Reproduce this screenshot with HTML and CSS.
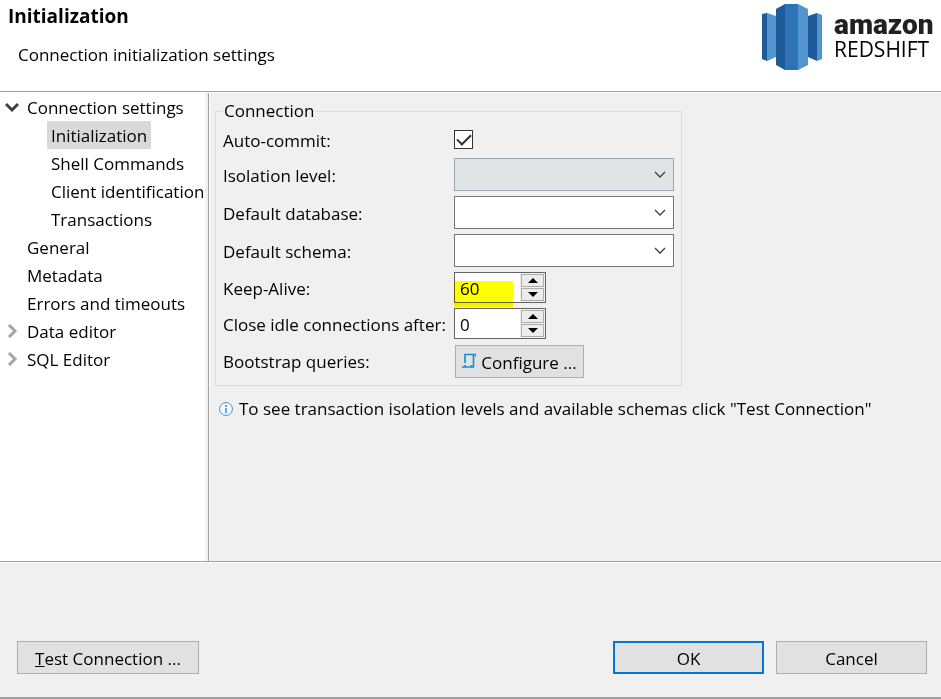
FILE: index.html
```
<!DOCTYPE html>
<html lang="en">
<head>
    <meta charset="UTF-8">
    <meta name="viewport" content="width=device-width, initial-scale=1.0">
    <title>Initialization</title>
    <link rel="stylesheet" href="styles.css">
</head>
<body>
    <header class="header">
        <div>
            <h1>Initialization</h1>
            <p>Connection initialization settings</p>
        </div>
        <div class="logo">
            <svg width="60" height="66" viewBox="0 0 60 66">
                <path fill="#205b99" d="M0 10l5-1v48l-5-2z"/>
                <path fill="#5294cf" d="M5 9l9 3v41l-9 4z"/>
                <path fill="#205b99" d="M46 12l9-3v48l-9-4z"/>
                <path fill="#5294cf" d="M55 9l5 2v44l-5 2z"/>
                <path fill="#205b99" d="M14 5l9-5v66l-9-5z"/>
                <path fill="#2e73b8" d="M23 0h13v66H23z"/>
                <path fill="#5294cf" d="M36 0l10 5v56l-10 5z"/>
            </svg>
            <div class="logo-text">
                <span class="logo-amazon">amazon</span>
                <span class="logo-redshift">REDSHIFT</span>
            </div>
        </div>
    </header>
    <main class="main">
        <nav class="tree">
            <ul>
                <li>
                    <svg class="arrow" width="14" height="14" viewBox="0 0 14 14"><path d="M1 4l6 6 6-6" fill="none" stroke="#404040" stroke-width="3"/></svg>
                    <a href="#">Connection settings</a>
                    <ul>
                        <li><a href="#" class="selected">Initialization</a></li>
                        <li><a href="#">Shell Commands</a></li>
                        <li><a href="#">Client identification</a></li>
                        <li><a href="#">Transactions</a></li>
                    </ul>
                </li>
                <li><a href="#">General</a></li>
                <li><a href="#">Metadata</a></li>
                <li><a href="#">Errors and timeouts</a></li>
                <li>
                    <svg class="arrow" width="14" height="14" viewBox="0 0 14 14"><path d="M4 1l6 6-6 6" fill="none" stroke="#a6a6a6" stroke-width="3"/></svg>
                    <a href="#">Data editor</a>
                </li>
                <li>
                    <svg class="arrow" width="14" height="14" viewBox="0 0 14 14"><path d="M4 1l6 6-6 6" fill="none" stroke="#a6a6a6" stroke-width="3"/></svg>
                    <a href="#">SQL Editor</a>
                </li>
            </ul>
        </nav>
        <section class="content">
            <fieldset>
                <legend>Connection</legend>
                <div class="form">
                    <label for="auto-commit">Auto-commit:</label>
                    <input type="checkbox" id="auto-commit" class="checkbox" checked>
                    <label for="isolation">Isolation level:</label>
                    <div class="combo">
                        <select id="isolation" disabled></select>
                        <svg width="12" height="8" viewBox="0 0 12 8"><path d="M1 1l5 5 5-5" fill="none" stroke="#404040" stroke-width="1.300"/></svg>
                    </div>
                    <label for="database">Default database:</label>
                    <div class="combo">
                        <select id="database"></select>
                        <svg width="12" height="8" viewBox="0 0 12 8"><path d="M1 1l5 5 5-5" fill="none" stroke="#404040" stroke-width="1.300"/></svg>
                    </div>
                    <label for="schema">Default schema:</label>
                    <div class="combo">
                        <select id="schema"></select>
                        <svg width="12" height="8" viewBox="0 0 12 8"><path d="M1 1l5 5 5-5" fill="none" stroke="#404040" stroke-width="1.300"/></svg>
                    </div>
                    <label for="keep-alive">Keep-Alive:</label>
                    <div class="spinner highlighted">
                        <input type="number" id="keep-alive" value="60">
                        <div class="steps">
                            <button type="button" aria-label="Increase"><svg width="10" height="5"><path d="M0 5l5-5 5 5z"/></svg></button>
                            <button type="button" aria-label="Decrease"><svg width="10" height="5"><path d="M0 0l5 5 5-5z"/></svg></button>
                        </div>
                    </div>
                    <label for="close-idle">Close idle connections after:</label>
                    <div class="spinner">
                        <input type="number" id="close-idle" value="0">
                        <div class="steps">
                            <button type="button" aria-label="Increase"><svg width="10" height="5"><path d="M0 5l5-5 5 5z"/></svg></button>
                            <button type="button" aria-label="Decrease"><svg width="10" height="5"><path d="M0 0l5 5 5-5z"/></svg></button>
                        </div>
                    </div>
                    <label for="configure">Bootstrap queries:</label>
                    <button type="button" id="configure" class="button configure">
                        <svg width="14" height="16" viewBox="0 0 14 16"><path d="M3 10V1.500H14V4M11.500 1.500V14M0 14H12M3 14v-2M9.500 12V14" fill="none" stroke="#0f8fd0" stroke-width="1.600"/></svg>
                        Configure ...
                    </button>
                </div>
            </fieldset>
            <p class="hint">
                <svg width="14" height="14" viewBox="0 0 14 14"><circle cx="7" cy="7" r="6.400" fill="#f5faff" stroke="#3c8fd0"/><path d="M7 3v2M7 6v5" stroke="#3c8fd0" stroke-width="1.500"/></svg>
                To see transaction isolation levels and available schemas click "Test Connection"
            </p>
        </section>
    </main>
    <footer class="footer">
        <button type="button" class="button test"><u>T</u>est Connection ...</button>
        <button type="button" class="button primary">OK</button>
        <button type="button" class="button">Cancel</button>
    </footer>
</body>
</html>
```
FILE: styles.css
```
* {
    box-sizing: border-box;
}
body {
    margin: 0;
    min-height: 100vh;
    display: flex;
    flex-direction: column;
    background-color: #f0f0f0;
    border-bottom: 2px solid #a0a0a0;
    color: #000;
    font-family: "Open Sans", sans-serif;
    font-size: 17px;
    line-height: 24px;
}
button, input, select {
    font: inherit;
    color: inherit;
}
h1, p, ul {
    margin: 0;
    padding: 0;
}
.header {
    display: flex;
    justify-content: space-between;
    height: 92px;
    padding: 4px 10px 0 8px;
    background-color: #fff;
    border-bottom: 1px solid #a0a0a0;
}
.header h1 {
    font-size: 19px;
    line-height: 24px;
}
.header p {
    padding: 15px 10px;
}
.logo {
    display: flex;
    gap: 12px;
}
.logo-text {
    display: flex;
    flex-direction: column;
    width: 97px;
    padding-top: 5px;
    color: #231f20;
    white-space: nowrap;
}
.logo-amazon {
    font-family: Roboto, sans-serif;
    font-size: 28px;
    font-weight: 900;
    line-height: 32px;
}
.logo-redshift {
    font-size: 21px;
    line-height: 16px;
    color: #000;
}
.main {
    flex: 1;
    display: flex;
    border-top: 1px solid #fff;
}
.tree {
    flex: none;
    width: 209px;
    background-color: #fff;
    border-right: 1px solid #a0a0a0;
    box-shadow: inset -3px 0 #f0f0f0;
}
.tree ul {
    list-style: none;
}
.tree li {
    padding-left: 23px;
    line-height: 28px;
    white-space: nowrap;
}
.tree li li {
    padding-left: 24px;
}
.tree a {
    display: block;
    width: fit-content;
    height: 28px;
    padding: 1px 4px 0;
    color: #000;
    text-decoration: none;
}
.tree a.selected {
    background-color: #d9d9d9;
}
.tree .arrow {
    float: left;
    margin: 7px 0 0 -18px;
}
.content {
    flex: 1;
    padding: 6px 5px;
    border-left: 1px solid #fff;
}
fieldset {
    width: fit-content;
    margin: 0;
    padding: 3px 7px 7px;
    border: 1px solid #dcdcdc;
}
legend {
    padding: 0 1px;
}
.form {
    display: grid;
    grid-template-columns: 226px 220px;
    grid-template-rows: 27px repeat(3, 33px) repeat(2, 31px) 34px;
    align-items: center;
    gap: 5px;
}
.form label {
    padding-top: 2px;
    white-space: nowrap;
}
.checkbox {
    appearance: none;
    display: grid;
    place-items: center;
    width: 19px;
    height: 19px;
    margin: 0;
    background-color: #fff;
    border: 1px solid #333;
}
.checkbox:checked::before {
    content: "";
    width: 12px;
    height: 6px;
    margin-bottom: 4px;
    border: solid #333;
    border-width: 0 0 2px 2px;
    transform: rotate(-45deg);
}
.combo {
    position: relative;
    height: 33px;
}
.combo select {
    appearance: none;
    width: 100%;
    height: 100%;
    background-color: #fff;
    border: 1px solid #767676;
    border-radius: 0;
}
.combo select:disabled {
    background-color: #e1e3e5;
    border-color: #98a8b5;
    opacity: 1;
}
.combo svg {
    position: absolute;
    top: 13px;
    right: 8px;
    pointer-events: none;
}
.spinner {
    position: relative;
    display: flex;
    width: 92px;
    height: 31px;
    background-color: #fff;
    border: 1px solid #646464;
}
.spinner input {
    appearance: textfield;
    width: 65px;
    padding: 2px 5px 0;
    border: 0;
    background: none;
}
.spinner input::-webkit-inner-spin-button {
    display: none;
}
.steps {
    flex: 1;
    display: flex;
    flex-direction: column;
    gap: 1px;
    padding: 1px;
    background-color: #f0f0f0;
}
.steps button {
    flex: 1;
    display: flex;
    align-items: center;
    justify-content: center;
    padding: 0;
    background-color: #ececec;
    border: 1px solid #acacac;
}
/* yellow marker stroke over the field */
.highlighted::after {
    content: "";
    position: absolute;
    top: 8px;
    left: -1px;
    width: 59px;
    height: 26px;
    background-color: #ff0;
    mix-blend-mode: multiply;
    pointer-events: none;
}
.button {
    width: 151px;
    height: 33px;
    padding: 2px 0 0;
    background-color: #e1e1e1;
    border: 1px solid #adadad;
}
.button.primary {
    border: 2px solid #0078d7;
}
.button.configure {
    display: flex;
    align-items: center;
    justify-content: center;
    gap: 5px;
    width: 129px;
    margin: 1px 0 0 1px;
    white-space: nowrap;
}
.configure svg {
    flex: none;
    margin-bottom: 4px;
}
.hint {
    display: flex;
    align-items: center;
    gap: 6px;
    padding: 11px 4px;
    white-space: nowrap;
}
.footer {
    display: flex;
    align-items: flex-end;
    gap: 12px;
    height: 136px;
    padding: 0 14px 23px 17px;
    border-top: 1px solid #a0a0a0;
    box-shadow: inset 0 1px #fff;
}
.button.test {
    width: 182px;
    margin-right: auto;
}
```
